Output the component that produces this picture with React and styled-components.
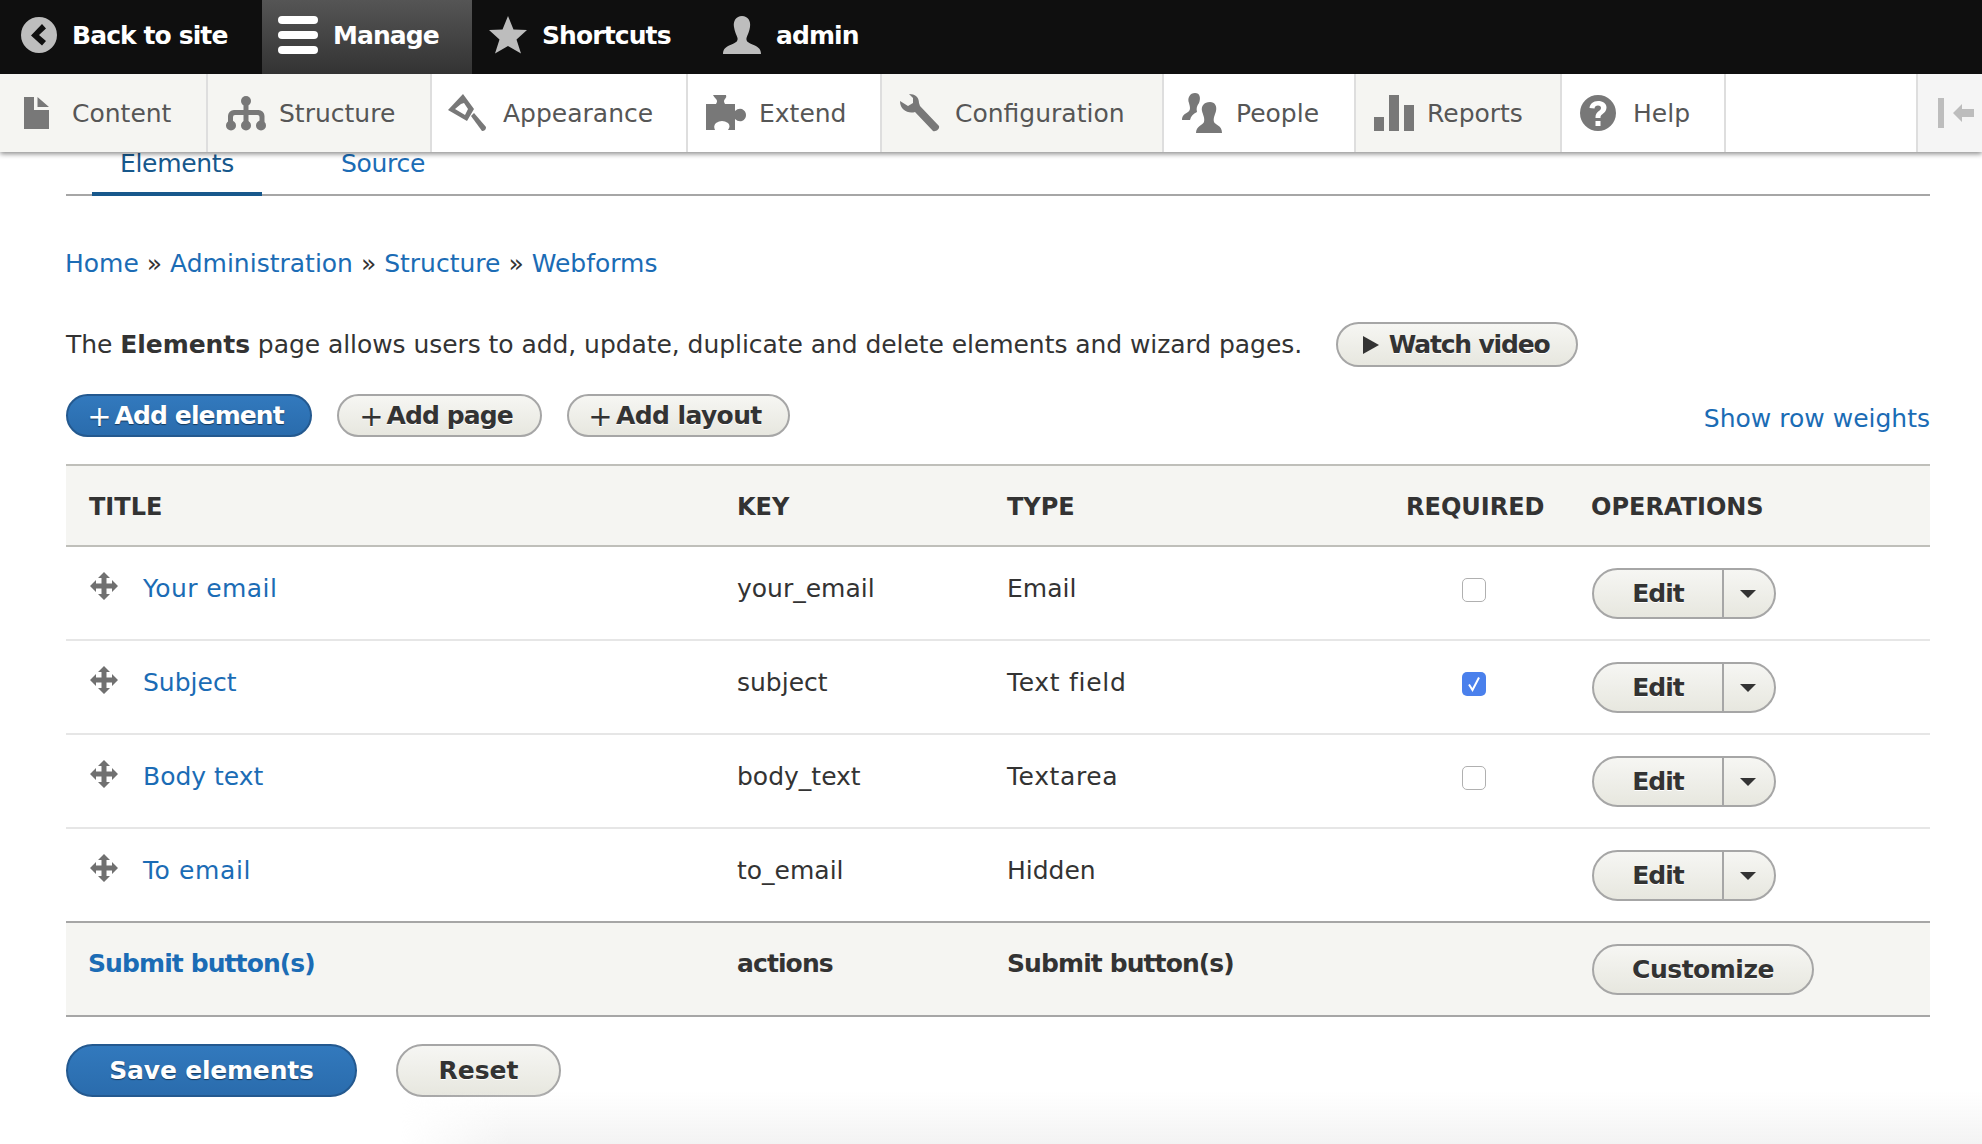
import React from 'react';
import styled, { createGlobalStyle } from 'styled-components';

const GlobalStyle = createGlobalStyle`
  html, body { margin: 0; padding: 0; background: #fff; }
  body { font-family: "DejaVu Sans", "Liberation Sans", sans-serif; color: #333; }
`;

const Page = styled.div`
  position: relative;
  width: 1982px;
  height: 1144px;
  overflow: hidden;
  background: #fff;
  &::after {
    content: '';
    position: absolute;
    left: 400px;
    right: 0;
    bottom: 0;
    height: 54px;
    background: linear-gradient(rgba(244,244,244,0), #f3f3f3);
    mask-image: linear-gradient(to right, transparent, #000 110px);
    pointer-events: none;
  }
`;

/* toolbar */
const Toolbar = styled.header`
  position: relative;
  z-index: 2;
  box-shadow: 0 2px 5px rgba(0,0,0,.45);
`;
const TopBar = styled.nav`
  display: flex;
  height: 74px;
  background: #0f0f0f;
`;
const TopItem = styled.a`
  display: flex;
  align-items: center;
  gap: ${p => p.$gap || 16}px;
  width: ${p => p.$w}px;
  padding-left: ${p => p.$pad}px;
  padding-bottom: 4px;
  box-sizing: border-box;
  color: #fff;
  font-weight: 700;
  font-size: 25px;
  letter-spacing: -0.9px;
  background: ${p => p.$active ? 'linear-gradient(#555, #333)' : 'none'};
  svg { flex: none; }
`;
const TrayBar = styled.nav`
  display: flex;
  height: 78px;
  background: #fff;
`;
const TrayItem = styled.a`
  display: flex;
  align-items: center;
  gap: ${p => p.$gap}px;
  width: ${p => p.$w}px;
  padding-left: ${p => p.$pad}px;
  box-sizing: border-box;
  font-size: 25px;
  color: #565656;
  background: ${p => p.$shade ? '#f5f5f2' : '#fff'};
  border-right: 2px solid #dedede;
  svg { flex: none; }
`;
const TraySpacer = styled.div`
  flex: 1;
`;
const TrayToggle = styled.div`
  display: flex;
  align-items: center;
  width: 66px;
  padding-left: 20px;
  box-sizing: border-box;
  background: #f5f5f5;
  border-left: 2px solid #dedede;
`;

/* page body */
const Main = styled.main`
  padding: 0 52px 0 66px;
`;
const Tabs = styled.div`
  display: flex;
  box-sizing: border-box;
  margin-top: -8px;
  height: 52px;
  border-bottom: 2px solid #a6a6a6;
`;
const Tab = styled.a`
  box-sizing: border-box;
  width: ${p => p.$w}px;
  height: 52px;
  margin-left: ${p => p.$ml}px;
  text-align: center;
  font-size: 25px;
  line-height: 40px;
  letter-spacing: -0.3px;
  color: ${p => p.$active ? '#17588c' : '#1b6cb5'};
  border-bottom: ${p => p.$active ? '4px solid #17588c' : '0'};
`;
const Crumbs = styled.div`
  margin-top: 50px;
  margin-left: -1px;
  font-size: 25px;
  line-height: 36px;
  color: #333;
`;
const Link = styled.a`
  color: #1b6cb5;
  font-weight: ${p => p.$bold ? 700 : 400};
  letter-spacing: ${p => p.$ls || 0}px;
`;
const Intro = styled.div`
  display: flex;
  align-items: center;
  margin-top: 40px;
  height: 45px;
  font-size: 25px;
  letter-spacing: -0.06px;
  color: #333;
`;
const Pill = styled.button`
  display: inline-flex;
  align-items: center;
  justify-content: center;
  gap: ${p => p.$gap || 0}px;
  box-sizing: border-box;
  width: ${p => p.$w}px;
  height: ${p => p.$h || 43}px;
  padding: 0 ${p => p.$pr || 0}px 0 0;
  border: 2px solid ${p => p.$primary ? '#24598f' : '#a6a6a6'};
  border-radius: 27px;
  background: ${p => p.$primary ? 'linear-gradient(#3279bd, #2a6cad)' : 'linear-gradient(#f6f6f3, #e7e7df)'};
  color: ${p => p.$primary ? '#fff' : '#333'};
  font-family: inherit;
  font-weight: 700;
  font-size: 25px;
  letter-spacing: ${p => p.$ls || 0}px;
  text-shadow: ${p => p.$primary ? '0 1px 1px rgba(0,0,0,.5)' : '0 1px 0 #fff'};
`;
const WatchPill = styled(Pill)`
  margin-left: 34px;
`;
const ActionBar = styled.div`
  display: flex;
  align-items: center;
  gap: 25px;
  margin-top: 27px;
  height: 43px;
`;
const Plus = styled.span`
  font-weight: 400;
  font-size: 29px;
  line-height: 30px;
  margin-right: 4px;
`;
const WeightsLink = styled(Link)`
  margin-left: auto;
  padding-top: 6px;
  font-size: 25px;
`;
const Table = styled.div`
  margin-top: 27px;
`;
const Row = styled.div`
  display: grid;
  grid-template-columns: 671px 270px 399px 185px 1fr;
  box-sizing: border-box;
  height: ${p => p.$h}px;
  align-items: start;
  font-size: 25px;
  background: ${p => p.$shade ? '#f5f5f2' : 'transparent'};
  border-top: ${p => p.$top || 'none'};
  border-bottom: ${p => p.$bottom || 'none'};
`;
const Cell = styled.div`
  padding-top: ${p => p.$top ?? 24}px;
  line-height: 36px;
  font-weight: ${p => p.$bold ? 700 : 400};
  letter-spacing: ${p => p.$bold ? -0.9 : (p.$ls || 0)}px;
  color: #333;
`;
const TitleCell = styled(Cell)`
  display: flex;
  align-items: flex-start;
  gap: 25px;
  padding-left: ${p => p.$pad}px;
  svg { margin-top: 1px; flex: none; }
`;
const HeadCell = styled.div`
  padding-top: 23px;
  padding-left: ${p => p.$pad || 0}px;
  line-height: 36px;
  font-weight: 700;
  font-size: 24px;
  color: #333;
`;
const CheckCell = styled.div`
  padding: 31px 0 0 56px;
`;
const Check = styled.span`
  display: flex;
  align-items: center;
  justify-content: center;
  box-sizing: border-box;
  width: 24px;
  height: 24px;
  border-radius: 5px;
  border: ${p => p.$on ? '0' : '1.5px solid #b0b0b0'};
  background: ${p => p.$on ? '#4a80ec' : '#fff'};
`;
const OpsCell = styled.div`
  padding-top: 21px;
  padding-left: 1px;
`;
const Split = styled.div`
  display: inline-flex;
  box-sizing: border-box;
  width: 184px;
  height: 51px;
  border: 2px solid #a6a6a6;
  border-radius: 26px;
  overflow: hidden;
  background: linear-gradient(#f6f6f3, #e7e7df);
`;
const SplitMain = styled.span`
  flex: 1;
  display: flex;
  align-items: center;
  justify-content: center;
  font-weight: 700;
  font-size: 25px;
  letter-spacing: -1px;
  color: #333;
  text-shadow: 0 1px 0 #fff;
  border-right: 2px solid #a6a6a6;
`;
const SplitArrow = styled.span`
  width: 50px;
  display: flex;
  align-items: center;
  justify-content: center;
  padding-right: 2px;
  box-sizing: border-box;
  &::after {
    content: '';
    border-top: 8px solid #333;
    border-left: 8px solid transparent;
    border-right: 8px solid transparent;
  }
`;
const FormActions = styled.div`
  display: flex;
  gap: 39px;
  margin-top: 27px;
`;

const Svg = ({ w, h, vb, fill = '#787878', children }) => (
  <svg width={w} height={h} viewBox={vb || `0 0 ${w} ${h}`} fill={fill}>{children}</svg>
);

const BackIcon = () => (
  <Svg w={36} h={36} fill="#bdbdbd">
    <path fillRule="evenodd" d="M18 0a18 18 0 1 1 0 36a18 18 0 0 1 0-36zM21 7L10 18.500L21 28.500L25 24L18 18L25 11.500z" />
  </Svg>
);
const MenuIcon = () => (
  <Svg w={40} h={38} fill="#fff">
    <rect y="0" width="40" height="8" rx="4" />
    <rect y="15" width="40" height="8" rx="4" />
    <rect y="30" width="40" height="8" rx="4" />
  </Svg>
);
const StarIcon = () => (
  <Svg w={38} h={38} fill="#bdbdbd">
    <path d="M19 0L24.500 13.500L38 14L27.500 23.500L32 37.500L19 30L6 37.500L10.500 23.500L0 14L13.500 13.500z" />
  </Svg>
);
const UserIcon = ({ fill = '#bdbdbd' }) => (
  <Svg w={38} h={38} fill={fill}>
    <path d="M19 0c6 0 9 5 8 11c-.5 4-2.500 8-3.500 11c-.5 3 1 4.500 6 6.500c5 2 8.500 4 8.500 9.500H0c0-5.500 3.500-7.500 8.500-9.500c5-2 6.500-3.500 6-6.500c-1-3-3-7-3.500-11C10 5 13 0 19 0z" />
  </Svg>
);
const PageIcon = () => (
  <Svg w={25} h={32}>
    <path d="M0 0H10V13H25V32H0zM13.500 0L25 10H13.500z" />
  </Svg>
);
const TreeIcon = () => (
  <Svg w={40} h={35}>
    <circle cx="20" cy="5" r="5" />
    <circle cx="5" cy="29.500" r="5" />
    <circle cx="20" cy="29.500" r="5" />
    <circle cx="35" cy="29.500" r="5" />
    <path d="M17.500 8h5v6h10a6 6 0 0 1 6 6v6h-5v-5a2 2 0 0 0-2-2H22.500v8h-5v-8H9a2 2 0 0 0-2 2v5H2v-6a6 6 0 0 1 6-6h9.500z" />
  </Svg>
);
const BrushIcon = () => (
  <Svg w={38} h={38}>
    <path fillRule="evenodd" d="M15 0L26 15L19 27L0 16zM13 10L7 15L17 21L20 15L16 9z" />
    <path d="M23 22L26 19L38 33Q38 37 34 37z" />
  </Svg>
);
const PuzzleIcon = () => (
  <Svg w={40} h={36}>
    <path d="M7 0H20Q21 2 19 4Q17 6 19 9H29V16Q32 13 36 14Q40 16 40 20Q40 24 36 26Q32 27 29 24V35H22Q25 31 22 28Q16 24 10 28Q7 31 9 35H0V9H10Q12 6 10 4Q8 2 7 0z" />
  </Svg>
);
const WrenchIcon = () => (
  <Svg w={40} h={38}>
    <path d="M9 0C15 0 19 3 19 9L20 12L39 32C40 35 36 38 33 37L15 18C8 20 0 16 0 7L8 12L13 9L13 4z" />
  </Svg>
);
const PeopleIcon = () => (
  <Svg w={40} h={40}>
    <path d="M13 0c5 0 6 5 4 10c-2 3-3 5 -2 9c-4 2-6 4-7 8H0c0-5 3-6 6-8c3-2 2-5 1-9C5 5 8 0 13 0z" />
    <path d="M28 9c5 0 7 4 6 9c-1 4-3 7-2 11c1 3 8 3 8 11H14c0-7 7-8 8-11c1-4-1-7-2-11c-1-5 2-9 8-9z" />
  </Svg>
);
const BarsIcon = () => (
  <Svg w={40} h={36}>
    <rect x="0" y="22" width="10" height="14" />
    <rect x="15" y="0" width="10" height="36" />
    <rect x="30" y="10" width="10" height="26" />
  </Svg>
);
const HelpIcon = () => (
  <Svg w={36} h={36}>
    <path fillRule="evenodd" d="M18 0a18 18 0 1 1 0 36a18 18 0 0 1 0-36zM18 6c-5 0-8 3-8.500 7l5 .5c.2-2 1.500-3 3.500-3c2 0 3 1 3 2.500c0 3-5.500 3.500-5.500 9v1h5v-1c0-3 6-4 6-9.500C26.500 8.500 23 6 18 6zM15.500 26v5h5v-5z" />
  </Svg>
);
const CollapseIcon = () => (
  <Svg w={36} h={30} fill="#bdbdbd">
    <rect width="6" height="30" />
    <path d="M15 15L24 6V11H36V19H24V24z" />
  </Svg>
);
const DragIcon = () => (
  <Svg w={28} h={28} fill="#707070">
    <path d="M14 0L20 6H16.500V11.500H22V8L28 14L22 20V16.500H16.500V22H20L14 28L8 22H11.500V16.500H6V20L0 14L6 8V11.500H11.500V6H8z" />
  </Svg>
);
const PlayIcon = () => (
  <Svg w={16} h={18} fill="#333">
    <path d="M0 0L16 9L0 18z" />
  </Svg>
);
const CheckMark = () => (
  <Svg w={14} h={16} fill="none">
    <path d="M2 8.500L5.500 14L12 1.500" stroke="#fff" strokeWidth="2" />
  </Svg>
);

const trayItems = [
  { label: 'Content', w: 208, pad: 24, gap: 23, shade: true, Icon: PageIcon },
  { label: 'Structure', w: 224, pad: 18, gap: 13, shade: true, Icon: TreeIcon },
  { label: 'Appearance', w: 256, pad: 16, gap: 17, Icon: BrushIcon },
  { label: 'Extend', w: 194, pad: 18, gap: 13, Icon: PuzzleIcon },
  { label: 'Configuration', w: 282, pad: 18, gap: 15, shade: true, Icon: WrenchIcon },
  { label: 'People', w: 192, pad: 18, gap: 14, Icon: PeopleIcon },
  { label: 'Reports', w: 206, pad: 18, gap: 13, shade: true, Icon: BarsIcon },
  { label: 'Help', w: 164, pad: 18, gap: 17, Icon: HelpIcon },
];

const rows = [
  { title: 'Your email', titleLs: 0.4, key_: 'your_email', type: 'Email', checked: false, h: 94 },
  { title: 'Subject', titleLs: 0, key_: 'subject', type: 'Text field', typeLs: 0.7, checked: true, h: 94 },
  { title: 'Body text', titleLs: 0, key_: 'body_text', type: 'Textarea', typeLs: 0.6, checked: false, h: 94 },
  { title: 'To email', titleLs: 0.6, key_: 'to_email', type: 'Hidden', h: 92 },
];

export default function App() {
  return (
    <Page>
      <GlobalStyle />
      <Toolbar>
        <TopBar>
          <TopItem $w={262} $pad={21} $gap={15}><BackIcon />Back to site</TopItem>
          <TopItem $w={210} $pad={16} $gap={15} $active><MenuIcon />Manage</TopItem>
          <TopItem $w={234} $pad={17} $gap={15}><StarIcon />Shortcuts</TopItem>
          <TopItem $w={200} $pad={17} $gap={15}><UserIcon />admin</TopItem>
        </TopBar>
        <TrayBar>
          {trayItems.map(({ label, w, pad, gap, shade, Icon }) => (
            <TrayItem key={label} $w={w} $pad={pad} $gap={gap} $shade={shade}><Icon />{label}</TrayItem>
          ))}
          <TraySpacer />
          <TrayToggle><CollapseIcon /></TrayToggle>
        </TrayBar>
      </Toolbar>
      <Main>
        <Tabs>
          <Tab $active $w={170} $ml={26}>Elements</Tab>
          <Tab $w={170} $ml={36}>Source</Tab>
        </Tabs>
        <Crumbs>
          <Link>Home</Link> » <Link>Administration</Link> » <Link>Structure</Link> » <Link>Webforms</Link>
        </Crumbs>
        <Intro>
          <span>The <b>Elements</b> page allows users to add, update, duplicate and delete elements and wizard pages.</span>
          <WatchPill $w={242} $h={45} $gap={10} $ls={-1.2} $pr={2}><PlayIcon />Watch video</WatchPill>
        </Intro>
        <ActionBar>
          <Pill $primary $w={246} $ls={-0.9} $pr={7}><Plus>+</Plus>Add element</Pill>
          <Pill $w={205} $ls={-0.9} $pr={7}><Plus>+</Plus>Add page</Pill>
          <Pill $w={223} $ls={-0.6} $pr={7}><Plus>+</Plus>Add layout</Pill>
          <WeightsLink>Show row weights</WeightsLink>
        </ActionBar>
        <Table>
          <Row $h={83} $shade $top="2px solid #bfbfba" $bottom="2px solid #bfbfba">
            <HeadCell $pad={23}>TITLE</HeadCell>
            <HeadCell>KEY</HeadCell>
            <HeadCell>TYPE</HeadCell>
            <HeadCell>REQUIRED</HeadCell>
            <HeadCell>OPERATIONS</HeadCell>
          </Row>
          {rows.map((r, i) => (
            <Row key={r.key_} $h={r.h} $bottom={i < 3 ? '2px solid #e6e6e6' : 'none'}>
              <TitleCell $pad={24}><DragIcon /><Link $ls={r.titleLs}>{r.title}</Link></TitleCell>
              <Cell>{r.key_}</Cell>
              <Cell $ls={r.typeLs}>{r.type}</Cell>
              <CheckCell>
                {r.checked !== undefined && (
                  <Check $on={r.checked}>{r.checked && <CheckMark />}</Check>
                )}
              </CheckCell>
              <OpsCell>
                <Split><SplitMain>Edit</SplitMain><SplitArrow /></Split>
              </OpsCell>
            </Row>
          ))}
          <Row $h={96} $shade $top="2px solid #a6a6a6" $bottom="2px solid #a6a6a6">
            <TitleCell $pad={22} $top={23}><Link $bold $ls={-0.9}>Submit button(s)</Link></TitleCell>
            <Cell $bold $top={23}>actions</Cell>
            <Cell $bold $top={23}>Submit button(s)</Cell>
            <div />
            <OpsCell><Pill $w={222} $h={51} $ls={-0.5}>Customize</Pill></OpsCell>
          </Row>
        </Table>
        <FormActions>
          <Pill $primary $w={291} $h={53} $ls={-0.2}>Save elements</Pill>
          <Pill $w={165} $h={53}>Reset</Pill>
        </FormActions>
      </Main>
    </Page>
  );
}
